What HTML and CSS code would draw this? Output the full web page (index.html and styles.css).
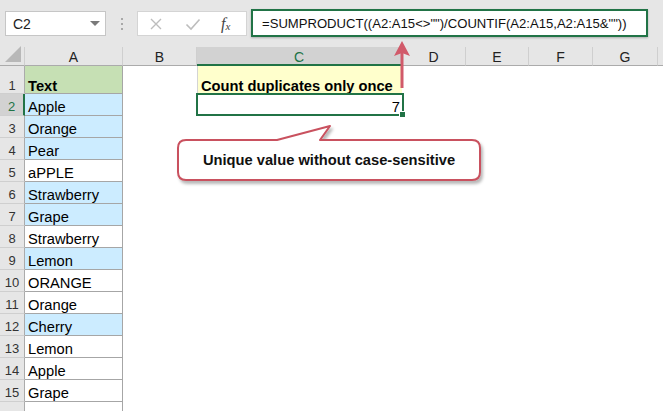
FILE: index.html
```html
<!DOCTYPE html>
<html>
<head>
<meta charset="utf-8">
<link rel="stylesheet" href="styles.css">
</head>
<body>
<div class="app">
  <div class="toolbar">
    <div class="namebox"><span>C2</span><svg class="dd" width="10" height="6" viewBox="0 0 10 6"><path d="M0 0H10L5 5Z" fill="#7a7a7a"/></svg></div>
    <div class="dots"><i></i><i></i><i></i></div>
    <div class="fxbox">
      <svg width="14" height="14" viewBox="0 0 14 14"><path d="M2 2L12 12M12 2L2 12" stroke="#bdbdbd" stroke-width="1.4" fill="none"/></svg>
      <svg width="16" height="14" viewBox="0 0 16 14"><path d="M1.5 7.5L6 12L14.5 2.5" stroke="#bdbdbd" stroke-width="1.6" fill="none"/></svg>
      <span class="fx">f<sub>x</sub></span>
    </div>
    <div class="formula">=SUMPRODUCT((A2:A15&lt;&gt;"")/COUNTIF(A2:A15,A2:A15&amp;""))</div>
  </div>
  <div class="sheet">
    <div class="corner"><svg width="16" height="16" viewBox="0 0 16 16"><path d="M16 0V16H0Z" fill="#b8b8b8"/></svg></div>
    <div class="ch">A</div>
    <div class="ch">B</div>
    <div class="ch sel">C</div>
    <div class="ch">D</div>
    <div class="ch">E</div>
    <div class="ch">F</div>
    <div class="ch">G</div>
    <div class="ch last"></div>

    <div class="rh tall">1</div>
    <div class="a tall head">Text</div>
    <div class="c tall"></div>
    <div class="c tall yellow">Count duplicates only once</div>
    <div class="c tall"></div><div class="c tall"></div><div class="c tall"></div><div class="c tall"></div><div class="c tall"></div>

    <div class="rh rsel">2</div>
    <div class="a blue">Apple</div>
    <div class="c"></div>
    <div class="c selcell">7<span class="handle"></span></div>
    <div class="c"></div><div class="c"></div><div class="c"></div><div class="c"></div><div class="c"></div>

    <div class="rh">3</div><div class="a blue">Orange</div><div class="c span7"></div>
    <div class="rh">4</div><div class="a blue">Pear</div><div class="c span7"></div>
    <div class="rh">5</div><div class="a">aPPLE</div><div class="c span7"></div>
    <div class="rh">6</div><div class="a blue">Strawberry</div><div class="c span7"></div>
    <div class="rh">7</div><div class="a blue">Grape</div><div class="c span7"></div>
    <div class="rh">8</div><div class="a">Strawberry</div><div class="c span7"></div>
    <div class="rh">9</div><div class="a blue">Lemon</div><div class="c span7"></div>
    <div class="rh">10</div><div class="a">ORANGE</div><div class="c span7"></div>
    <div class="rh">11</div><div class="a">Orange</div><div class="c span7"></div>
    <div class="rh">12</div><div class="a blue">Cherry</div><div class="c span7"></div>
    <div class="rh">13</div><div class="a">Lemon</div><div class="c span7"></div>
    <div class="rh">14</div><div class="a">Apple</div><div class="c span7"></div>
    <div class="rh">15</div><div class="a">Grape</div><div class="c span7"></div>
    <div class="rh"></div><div class="a nob"></div><div class="c span7"></div>
  </div>

  <svg class="arrow" width="20" height="52" viewBox="0 0 20 52">
    <rect x="8.5" y="12" width="3" height="36" fill="#d15a6a"/>
    <path d="M2 16L10 1L18 16L10 13Z" fill="#d15a6a"/>
  </svg>

  <div class="callout">
    <svg class="bubble" width="320" height="70" viewBox="0 0 320 70">
      <defs>
        <filter id="sh" x="-10%" y="-20%" width="130%" height="160%">
          <feDropShadow dx="2" dy="3" stdDeviation="1.5" flood-color="#000" flood-opacity="0.28"/>
        </filter>
      </defs>
      <path filter="url(#sh)" d="M19 20H110L163 6L153 20H305Q313 20 313 28V52Q313 60 305 60H19Q11 60 11 52V28Q11 20 19 20Z" fill="#fff" stroke="#c9515e" stroke-width="2" stroke-linejoin="round"/>
    </svg>
    <div class="ctext">Unique value without case-sensitive</div>
  </div>
</div>
</body>
</html>
```

FILE: styles.css
```css
html, body {
  margin: 0;
  padding: 0;
  background: #ffffff;
}
.app {
  position: relative;
  width: 663px;
  height: 411px;
  overflow: hidden;
  font-family: "Liberation Sans", Arial, sans-serif;
  background: #ffffff;
}
.toolbar {
  height: 47px;
  background: #e6e6e6;
  display: flex;
  align-items: flex-start;
  box-sizing: border-box;
  padding-top: 11px;
  padding-left: 5px;
}
.namebox {
  width: 101px;
  height: 25px;
  box-sizing: border-box;
  background: #fff;
  border: 1px solid #c6c6c6;
  display: flex;
  align-items: center;
  justify-content: space-between;
  padding: 0 5px 0 7px;
  font-size: 14px;
  color: #222;
}
.dots {
  width: 31px;
  height: 25px;
  display: flex;
  flex-direction: column;
  align-items: center;
  justify-content: center;
  gap: 3px;
}
.dots i {
  display: block;
  width: 2px;
  height: 2px;
  background: #a8a8a8;
}
.fxbox {
  width: 110px;
  height: 25px;
  box-sizing: border-box;
  background: #fff;
  border: 1px solid #d4d4d4;
  display: flex;
  align-items: center;
  padding-left: 11px;
  gap: 22px;
}
.fx {
  font-family: "Liberation Serif", serif;
  font-style: italic;
  font-size: 16px;
  color: #444;
  margin-left: -2px;
}
.fx sub {
  font-size: 11px;
  vertical-align: -1px;
}
.formula {
  margin-left: 4px;
  margin-top: -2px;
  width: 397px;
  height: 28px;
  box-sizing: border-box;
  border: 2px solid #217346;
  background: #fff;
  box-shadow: 0 1px 2px rgba(0,0,0,0.25);
  font-size: 13.1px;
  line-height: 25px;
  padding-left: 9px;
  color: #111;
  white-space: nowrap;
}
.sheet {
  display: grid;
  grid-template-columns: 25px 98px 74px 205px 64px 63px 64px 65px 5px;
  grid-template-rows: 19px 28px;
  grid-auto-rows: 22px;
}
.corner {
  background: #e6e6e6;
  border-right: 1px solid #cfcfcf;
  border-bottom: 1px solid #ababab;
  box-sizing: border-box;
  display: flex;
  align-items: flex-end;
  justify-content: flex-end;
  padding: 0 3px 3px 0;
}
.ch {
  background: #e6e6e6;
  border-right: 1px solid #cfcfcf;
  border-bottom: 1px solid #ababab;
  box-sizing: border-box;
  font-size: 14px;
  color: #222;
  text-align: center;
  line-height: 20px;
}
.ch.sel {
  background: #d2d2d2;
  color: #217346;
  border-bottom: 2px solid #217346;
  border-right-color: #bcbcbc;
}
.ch.last {
  border-right: none;
}
.rh {
  background: #e6e6e6;
  border-right: 1px solid #ababab;
  border-bottom: 1px solid #cfcfcf;
  box-sizing: border-box;
  font-size: 13px;
  color: #333;
  text-align: center;
  line-height: 26px;
}
.rh.tall {
  line-height: 40px;
}
.rh.rsel {
  background: #d2d2d2;
  color: #217346;
  border-right: 2px solid #217346;
}
.a {
  border-right: 1px solid #a6a6a6;
  border-bottom: 1px solid #a6a6a6;
  box-sizing: border-box;
  font-size: 14.7px;
  color: #000;
  padding-left: 3px;
  line-height: 26px;
  white-space: nowrap;
}
.a.tall {
  line-height: 40px;
}
.a.head {
  background: #c6e0b4;
  font-weight: bold;
}
.a.blue {
  background: #ccecff;
}
.a.nob {
  border-bottom: none;
}
.c {
  background: #fff;
}
.c.span7 {
  grid-column: span 7;
}
.c.yellow {
  background: #ffffcc;
  font-weight: bold;
  font-size: 14.7px;
  line-height: 40px;
  padding-left: 3px;
  white-space: nowrap;
  border-left: 1px solid #d4d4d4;
}
.selcell {
  position: relative;
  border: 2px solid #217346;
  box-sizing: border-box;
  margin: -1px -2px 0 -1px;
  text-align: right;
  font-size: 14.7px;
  line-height: 24px;
  padding-right: 2px;
}
.handle {
  position: absolute;
  right: -4px;
  bottom: -4px;
  width: 5px;
  height: 5px;
  background: #217346;
  border: 1px solid #fff;
}
.arrow {
  position: absolute;
  left: 392px;
  top: 40px;
}
.callout {
  position: absolute;
  left: 167px;
  top: 120px;
  width: 320px;
  height: 70px;
}
.bubble {
  position: absolute;
  left: 0;
  top: 0;
}
.ctext {
  position: absolute;
  left: 11px;
  top: 20px;
  width: 302px;
  height: 40px;
  line-height: 40px;
  text-align: center;
  font-weight: bold;
  font-size: 14.7px;
  color: #111;
}
```
